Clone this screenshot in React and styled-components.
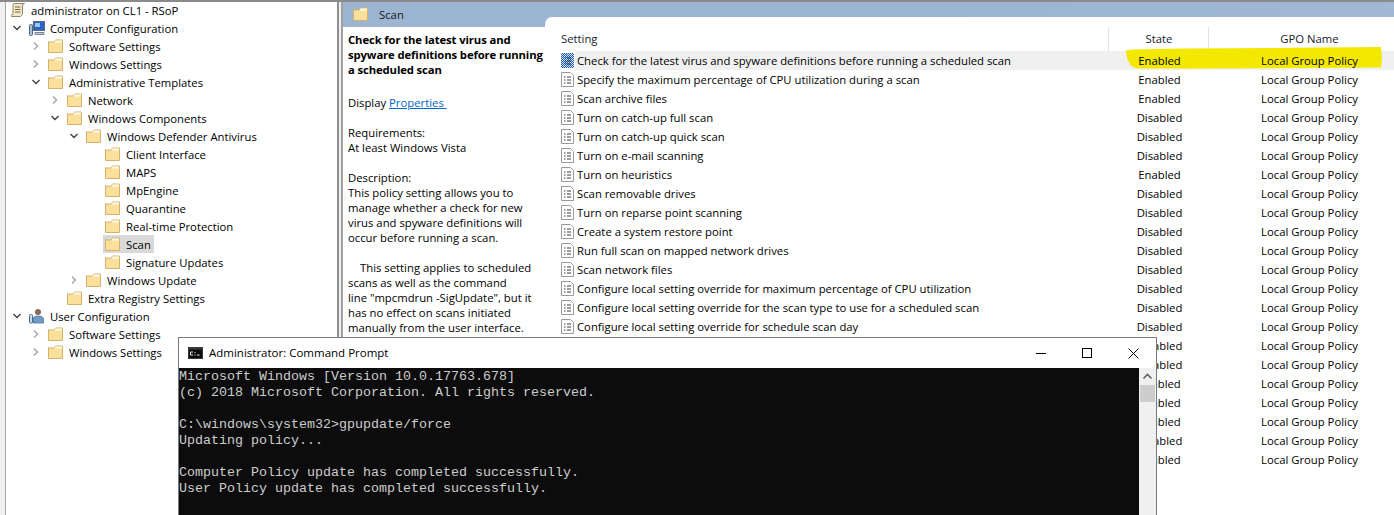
import React from "react";
import styled, { createGlobalStyle } from "styled-components";

const Global = createGlobalStyle`
  html, body { margin: 0; padding: 0; background: #fff; }
  body { font-family: "Open Sans", "Noto Sans", sans-serif; font-size: 11.3px; color: #000; }
`;

const Screen = styled.div`
  position: relative;
  width: 1394px;
  height: 515px;
  overflow: hidden;
  display: flex;
  background: #f0f0f0;
  border-top: 2px solid #8a8a8a;
  box-sizing: border-box;
`;

const TreePane = styled.nav`
  width: 331px;
  margin-left: 5px;
  background: #fff;
  border-left: 1px solid #a8a8a8;
  flex-shrink: 0;
`;

const TreeList = styled.div`
  margin-top: -1px;
`;

const TreeRow = styled.div`
  height: 18px;
  display: flex;
  align-items: center;
  white-space: nowrap;
`;

const Indent = styled.span`
  width: ${(p) => 4 + 19 * p.$level}px;
  flex-shrink: 0;
  display: flex;
  justify-content: flex-end;
  align-items: center;
`;

const Chevron = styled.svg`
  width: 8px;
  height: 8px;
  margin-right: 8px;
  fill: none;
  stroke: ${(p) => (p.$open ? "#404040" : "#a6a6a6")};
  stroke-width: 1.4;
`;

const TreeItem = styled.span`
  display: flex;
  align-items: center;
  height: 18px;
  margin-left: -2px;
  padding: 0 3px 0 2px;
  background: ${(p) => (p.$selected ? "#d9d9d9" : "transparent")};
`;

const IconSlot = styled.span`
  width: 21px;
  flex-shrink: 0;
  display: flex;
  align-items: center;
`;

const Splitter = styled.div`
  width: 6px;
  flex-shrink: 0;
  box-sizing: border-box;
  border-left: 2px solid #8f8f8f;
  border-right: 2px solid #a0a0a0;
  background: #f0f0f0;
`;

const DetailPane = styled.main`
  flex: 1;
  min-width: 0;
  background: #fff;
  display: flex;
  flex-direction: column;
`;

const BlueBar = styled.header`
  height: 25px;
  flex-shrink: 0;
  box-sizing: border-box;
  padding-left: 10px;
  display: flex;
  align-items: center;
  gap: 11px;
  padding-bottom: 1px;
  background: linear-gradient(90deg, #9ab4d2 0%, #9bb5d3 60%, #a0b8d4 100%);
  font-size: 11.3px;
`;

const BlueBarTitle = styled.span`
  color: #1a1a1a;
`;

const Content = styled.div`
  flex: 1;
  display: flex;
  min-height: 0;
`;

const Description = styled.aside`
  width: 202px;
  flex-shrink: 0;
  box-sizing: border-box;
  padding: 5px 0 0 5px;
  line-height: 15px;
  white-space: nowrap;
  overflow: hidden;
`;

const PolicyTitle = styled.h2`
  margin: 0 0 18px;
  font-size: 11.3px;
  line-height: 15px;
  font-weight: 700;
  letter-spacing: -0.12px;
`;

const Para = styled.p`
  margin: 0 0 15px;
`;

const PropsLink = styled.a`
  color: #0066cc;
  text-decoration: underline;
  white-space: pre;
`;

const FirstLine = styled.span`
  padding-left: 12px;
`;

const ListPane = styled.section`
  flex: 1;
  min-width: 0;
  margin-top: -10px;
  padding-top: 10px;
  background: #fff;
  border-top-left-radius: 7px;
  overflow: hidden;
`;

const ListHeader = styled.div`
  height: 24px;
  display: grid;
  grid-template-columns: 564px 100px 200px;
  align-items: center;
`;

const HeadCell = styled.span`
  height: 24px;
  line-height: 24px;
  box-sizing: border-box;
  text-align: ${(p) => (p.$left ? "left" : "center")};
  padding-left: ${(p) => (p.$left ? "16px" : "1px")};
  border-right: ${(p) => (p.$last ? "none" : "1px solid #e3e3e3")};
  color: #1a1a2a;
  white-space: nowrap;
`;

const Row = styled.div`
  height: 19px;
  display: flex;
  align-items: center;
`;

const RowIcon = styled.span`
  width: 30px;
  flex-shrink: 0;
  box-sizing: border-box;
  padding-left: 16px;
  display: flex;
  align-items: center;
`;

const RowBody = styled.div`
  position: relative;
  height: 19px;
  line-height: 19px;
  display: grid;
  grid-template-columns: 534px 100px 200px;
  background: ${(p) => (p.$active ? "#f0f0f0" : "transparent")};
  white-space: nowrap;
`;

const Marker = styled.svg`
  position: absolute;
  left: 550px;
  top: -5px;
  width: 258px;
  height: 24px;
`;

const Cell = styled.span`
  position: relative;
  padding-left: ${(p) => (p.$first ? "2px" : "1px")};
  text-align: ${(p) => (p.$first ? "left" : "center")};
`;

const CmdWindow = styled.section`
  position: absolute;
  left: 178px;
  top: 335px;
  width: 979px;
  height: 190px;
  box-sizing: border-box;
  background: #fff;
  border: 1px solid #7a7a7a;
  display: flex;
  flex-direction: column;
`;

const CmdTitle = styled.header`
  height: 30px;
  flex-shrink: 0;
  display: flex;
  align-items: center;
  padding-left: 9px;
  font-size: 11.5px;
  color: #000;
`;

const CmdIcon = styled.svg`
  width: 15px;
  height: 12px;
  margin: 0 6px 1px 0;
  flex-shrink: 0;
`;

const CmdTitleText = styled.span`
  flex: 1;
  padding-bottom: 2px;
`;

const WinButton = styled.span`
  width: 46px;
  height: 30px;
  flex-shrink: 0;
  display: flex;
  align-items: center;
  justify-content: center;
`;

const CmdBody = styled.div`
  flex: 1;
  display: flex;
  min-height: 0;
`;

const Console = styled.pre`
  flex: 1;
  margin: 0;
  padding-top: 1px;
  background: #0c0c0c;
  color: #cccccc;
  font-family: "Liberation Mono", monospace;
  font-size: 13.33px;
  line-height: 16px;
  overflow: hidden;
`;

const Scrollbar = styled.div`
  width: 17px;
  flex-shrink: 0;
  background: #f0f0f0;
  display: flex;
  flex-direction: column;
  align-items: center;
`;

const ScrollUp = styled.svg`
  width: 17px;
  height: 17px;
  fill: none;
  stroke: #606060;
  stroke-width: 1.6;
`;

const ScrollThumb = styled.div`
  width: 15px;
  height: 17px;
  background: #cdcdcd;
`;

const Folder = () => (
  <svg width="15" height="14" viewBox="0 0 15 14">
    <path d="M.5 2.5V13.5H14.5V1H7.5L6.5 3H.5Z" fill="#fbe3a6" stroke="#d4b26c" />
    <path d="M7.5 1.5H14V3.5H6.5Z" fill="#fff8e2" />
    <path d="M1 4H14V13H1Z" fill="#fbe09b" />
  </svg>
);

const ScrollDoc = () => (
  <svg width="16" height="16" viewBox="0 0 16 16">
    <path d="M4.5 1.5H14.5L12.5 3V12.5L10.5 14.5H1.5C1 13 2 12.5 3 12.5V3C3 2 3.5 1.5 4.5 1.5Z" fill="#f5e9c5" stroke="#8f8468" />
    <path d="M5 5H10.5M5 7.5H10.5M5 10H10.5" stroke="#77705c" />
  </svg>
);

const Computer = () => (
  <svg width="16" height="16" viewBox="0 0 16 16">
    <rect x="4.5" y="1.5" width="11" height="9" fill="#2a63c6" stroke="#5c6c80" />
    <rect x="6" y="3" width="5" height="4" fill="#9cc8f0" />
    <path d="M6 12.5H15V14.5H6Z" fill="#c5ccd4" stroke="#7a8694" />
    <rect x=".5" y="4.5" width="3" height="11" rx="1" fill="#a9bed2" stroke="#4a6a8a" />
  </svg>
);

const UserIcon = () => (
  <svg width="16" height="16" viewBox="0 0 16 16">
    <circle cx="9" cy="4" r="3" fill="#8a6a52" />
    <path d="M4 15V11C4 9 6 8 9 8S14.500 9 14.500 11V15Z" fill="#6f9cc8" stroke="#44688c" strokeWidth=".7" />
    <rect x=".5" y="6.500" width="3" height="8.500" rx="1" fill="#cfdbe6" stroke="#4a6a8a" />
  </svg>
);

const PolicyIcon = ({ active }) =>
  active ? (
    <svg width="13" height="15" viewBox="0 0 13 15">
      <defs>
        <pattern id="dither" width="2" height="2" patternUnits="userSpaceOnUse">
          <rect width="2" height="2" fill="#1f5fae" />
          <rect width="1" height="1" fill="#cfe0f2" />
          <rect x="1" y="1" width="1" height="1" fill="#cfe0f2" />
        </pattern>
      </defs>
      <rect width="13" height="15" fill="url(#dither)" />
      <path d="M4 5H5M4 8H5M4 11H5M6 5H10M6 8H10M6 11H10" stroke="#1b2a4a" />
    </svg>
  ) : (
    <svg width="13" height="15" viewBox="0 0 13 15">
      <path d="M.5 .5H9.500L12.500 3.500V14.500H.5Z" fill="#fff" stroke="#9a9a9a" />
      <path d="M3 5H4.500M3 8H4.500M3 11H4.500M6 5H10M6 8H10M6 11H10" stroke="#3c3c3c" />
    </svg>
  );

const tree = [
  { level: 0, label: "administrator on CL1 - RSoP", icon: "doc" },
  { level: 1, label: "Computer Configuration", icon: "pc", chevron: "open" },
  { level: 2, label: "Software Settings", chevron: "closed" },
  { level: 2, label: "Windows Settings", chevron: "closed" },
  { level: 2, label: "Administrative Templates", chevron: "open" },
  { level: 3, label: "Network", chevron: "closed" },
  { level: 3, label: "Windows Components", chevron: "open" },
  { level: 4, label: "Windows Defender Antivirus", chevron: "open" },
  { level: 5, label: "Client Interface" },
  { level: 5, label: "MAPS" },
  { level: 5, label: "MpEngine" },
  { level: 5, label: "Quarantine" },
  { level: 5, label: "Real-time Protection" },
  { level: 5, label: "Scan", selected: true },
  { level: 5, label: "Signature Updates" },
  { level: 4, label: "Windows Update", chevron: "closed" },
  { level: 3, label: "Extra Registry Settings" },
  { level: 1, label: "User Configuration", icon: "user", chevron: "open" },
  { level: 2, label: "Software Settings", chevron: "closed" },
  { level: 2, label: "Windows Settings", chevron: "closed" },
];

const treeIcons = { doc: ScrollDoc, pc: Computer, user: UserIcon };

const E = "Enabled";
const D = "Disabled";
const policies = [
  ["Check for the latest virus and spyware definitions before running a scheduled scan", E],
  ["Specify the maximum percentage of CPU utilization during a scan", E],
  ["Scan archive files", E],
  ["Turn on catch-up full scan", D],
  ["Turn on catch-up quick scan", D],
  ["Turn on e-mail scanning", D],
  ["Turn on heuristics", E],
  ["Scan removable drives", D],
  ["Turn on reparse point scanning", D],
  ["Create a system restore point", D],
  ["Run full scan on mapped network drives", D],
  ["Scan network files", D],
  ["Configure local setting override for maximum percentage of CPU utilization", D],
  ["Configure local setting override for the scan type to use for a scheduled scan", D],
  ["Configure local setting override for schedule scan day", D],
  ["", D],
  ["", D],
  ["", E],
  ["", E],
  ["", E],
  ["", D],
  ["", E],
];

const Chev = ({ open }) => (
  <Chevron $open={open} viewBox="0 0 8 8">
    {open ? <path d="M.5 2L4 5.500L7.500 2" /> : <path d="M2 .5L5.500 4L2 7.500" />}
  </Chevron>
);

export default function App() {
  return (
    <>
      <Global />
      <Screen>
        <TreePane>
          <TreeList>
            {tree.map((t, i) => {
              const Icon = treeIcons[t.icon] || Folder;
              return (
                <TreeRow key={i}>
                  <Indent $level={t.level}>
                    {t.chevron && <Chev open={t.chevron === "open"} />}
                  </Indent>
                  <TreeItem $selected={t.selected}>
                    <IconSlot><Icon /></IconSlot>
                    {t.label}
                  </TreeItem>
                </TreeRow>
              );
            })}
          </TreeList>
        </TreePane>
        <Splitter />
        <DetailPane>
          <BlueBar>
            <Folder />
            <BlueBarTitle>Scan</BlueBarTitle>
          </BlueBar>
          <Content>
            <Description>
              <PolicyTitle>
                Check for the latest virus and<br />
                spyware definitions before running<br />
                a scheduled scan
              </PolicyTitle>
              <Para>Display <PropsLink>Properties </PropsLink></Para>
              <Para>Requirements:<br />At least Windows Vista</Para>
              <Para>
                Description:<br />
                This policy setting allows you to<br />
                manage whether a check for new<br />
                virus and spyware definitions will<br />
                occur before running a scan.<br />
                <br />
                <FirstLine>This setting applies to scheduled</FirstLine><br />
                scans as well as the command<br />
                line "mpcmdrun -SigUpdate", but it<br />
                has no effect on scans initiated<br />
                manually from the user interface.
              </Para>
            </Description>
            <ListPane>
              <ListHeader>
                <HeadCell $left>Setting</HeadCell>
                <HeadCell>State</HeadCell>
                <HeadCell $last>GPO Name</HeadCell>
              </ListHeader>
              {policies.map(([name, state], i) => (
                <Row key={i}>
                  <RowIcon><PolicyIcon active={i === 0} /></RowIcon>
                  <RowBody $active={i === 0}>
                    {i === 0 && (
                      <Marker viewBox="0 0 258 24" preserveAspectRatio="none">
                        <path d="M1 4.500L8 3.500L60 2.500L200 1.500L256 1L257 12L256 21.500L180 22L60 22.500L12 22.500L6 20L2 12Z" fill="#f3e800" />
                      </Marker>
                    )}
                    <Cell $first>{name}</Cell>
                    <Cell>{state}</Cell>
                    <Cell>Local Group Policy</Cell>
                  </RowBody>
                </Row>
              ))}
            </ListPane>
          </Content>
        </DetailPane>
        <CmdWindow>
          <CmdTitle>
            <CmdIcon viewBox="0 0 15 12">
              <rect width="15" height="12" fill="#3a3a3a" />
              <rect x="1" y="2.500" width="13" height="8.500" fill="#0c0c0c" />
              <path d="M2.500 5H5M2.500 5V8H5M6.500 5.500H7.500M6.500 8H7.500M9 8H11.500" stroke="#e8e8e8" />
            </CmdIcon>
            <CmdTitleText>Administrator: Command Prompt</CmdTitleText>
            <WinButton>
              <svg width="10" height="10" viewBox="0 0 10 10"><path d="M0 5.500H10" stroke="#000" /></svg>
            </WinButton>
            <WinButton>
              <svg width="10" height="10" viewBox="0 0 10 10"><rect x=".5" y=".5" width="9" height="9" fill="none" stroke="#000" /></svg>
            </WinButton>
            <WinButton>
              <svg width="11" height="11" viewBox="0 0 11 11"><path d="M.5 .5L10.500 10.500M10.500 .5L.5 10.500" stroke="#000" /></svg>
            </WinButton>
          </CmdTitle>
          <CmdBody>
            <Console>{`Microsoft Windows [Version 10.0.17763.678]
(c) 2018 Microsoft Corporation. All rights reserved.

C:\\windows\\system32>gpupdate/force
Updating policy...

Computer Policy update has completed successfully.
User Policy update has completed successfully.`}</Console>
            <Scrollbar>
              <ScrollUp viewBox="0 0 17 17"><path d="M4.500 10.500L8.500 6.500L12.500 10.500" /></ScrollUp>
              <ScrollThumb />
            </Scrollbar>
          </CmdBody>
        </CmdWindow>
      </Screen>
    </>
  );
}
